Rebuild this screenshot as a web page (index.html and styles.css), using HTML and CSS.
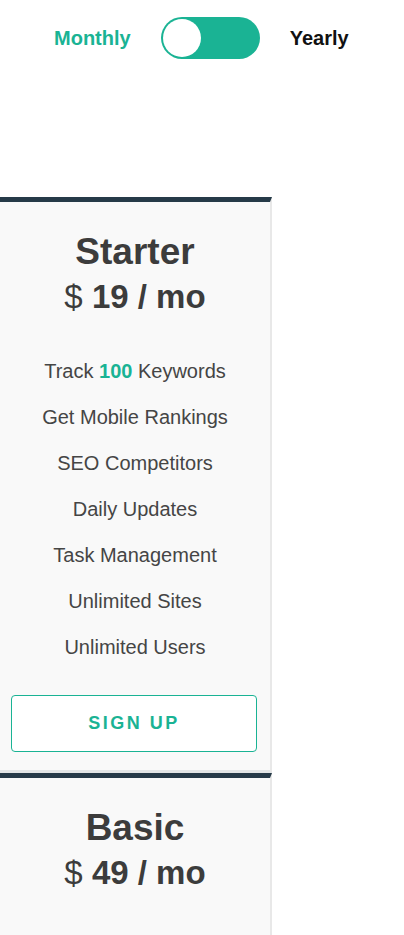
FILE: index.html
```html
<!DOCTYPE html>
<html>
<head>
<meta charset="utf-8">
<link rel="stylesheet" href="styles.css">
</head>
<body>
<div class="switcher">
  <span class="label label-active">Monthly</span>
  <span class="toggle"><span class="knob"></span></span>
  <span class="label">Yearly</span>
</div>
<div class="plans">
  <div class="card">
    <h2 class="plan-name">Starter</h2>
    <div class="price"><span class="cur">$</span> <b>19</b> <b class="per">/ mo</b></div>
    <ul class="features">
      <li>Track <b class="hl">100</b> Keywords</li>
      <li>Get Mobile Rankings</li>
      <li>SEO Competitors</li>
      <li>Daily Updates</li>
      <li>Task Management</li>
      <li>Unlimited Sites</li>
      <li>Unlimited Users</li>
    </ul>
    <a class="btn">SIGN UP</a>
  </div>
  <div class="card card-last">
    <h2 class="plan-name">Basic</h2>
    <div class="price"><span class="cur">$</span> <b>49</b> <b class="per">/ mo</b></div>
  </div>
</div>
</body>
</html>
```
FILE: styles.css
```css
html, body {
  margin: 0;
  padding: 0;
  background: #fff;
  font-family: "Liberation Sans", Arial, sans-serif;
  color: #404040;
}
.switcher {
  display: flex;
  align-items: center;
  padding: 17px 0 0 54px;
  gap: 30px;
  height: 42px;
}
.label {
  font-size: 20px;
  font-weight: bold;
  color: #111;
}
.label-active {
  color: #1ab394;
}
.toggle {
  width: 99px;
  height: 42px;
  border-radius: 21px;
  background: #1ab394;
  display: flex;
  align-items: center;
  padding: 0 2px;
  box-sizing: border-box;
}
.knob {
  width: 38px;
  height: 38px;
  border-radius: 50%;
  background: #fff;
}
.plans {
  margin-top: 138px;
  width: 272px;
}
.card {
  background: #f9f9f9;
  border-top: 5px solid #263a48;
  border-right: 2px solid #e8e8e8;
  border-bottom: 3px solid #e3e5e6;
  text-align: center;
  padding: 30px 0 18px;
}
.card-last {
  padding-bottom: 60px;
}
.plan-name {
  margin: 0;
  font-size: 37px;
  line-height: 40px;
  font-weight: bold;
  color: #3c3c3c;
}
.price {
  margin-top: 7px;
  font-size: 33px;
  line-height: 36px;
  color: #3c3c3c;
}
.price .cur {
  font-weight: normal;
}
.features {
  list-style: none;
  margin: 33px 0 0;
  padding: 0;
}
.features li {
  font-size: 20px;
  line-height: 46px;
  color: #454545;
}
.hl {
  color: #1ab394;
}
.btn {
  display: block;
  margin: 25px 13px 0 11px;
  height: 55px;
  line-height: 55px;
  border: 1px solid #1ab394;
  border-radius: 4px;
  background: #fff;
  color: #1ab394;
  font-weight: bold;
  font-size: 18px;
  letter-spacing: 2.5px;
}
```
